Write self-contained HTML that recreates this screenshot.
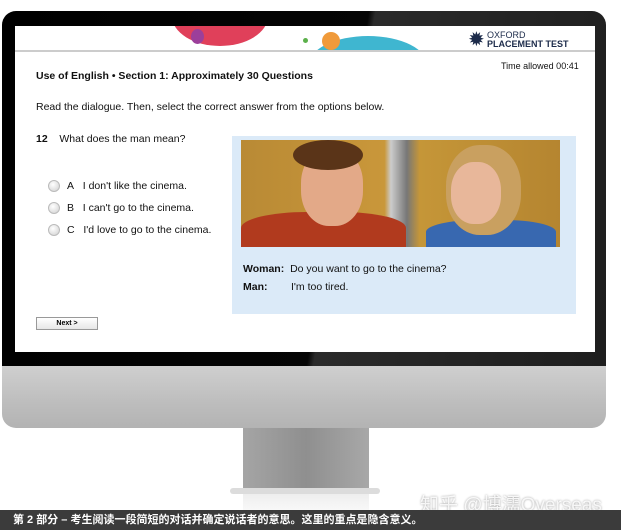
<!DOCTYPE html>
<html><head><meta charset="utf-8"><style>
body{margin:0;width:621px;height:530px;background:#fff;position:relative;overflow:hidden;font-family:"Liberation Sans",Arial,sans-serif;}
.abs{position:absolute}
.bezel{left:2px;top:11px;width:604px;height:360px;background:linear-gradient(100deg,#000 0%,#050505 55%,#2a2a2a 56%,#1e1e1e 100%);border-radius:14px 14px 0 0}
.chin{left:2px;top:366px;width:604px;height:62px;background:linear-gradient(#cfcfcf,#bdbdbd 60%,#b3b3b3);border-radius:0 0 14px 14px}
.screen{left:15px;top:26px;width:580px;height:326px;background:#fff;overflow:hidden}
.t{font-size:10.5px;color:#111;white-space:nowrap}
.radio{width:10px;height:10px;border-radius:50%;background:radial-gradient(circle at 40% 35%,#fff,#cfcfcf);border:1px solid #bbb}
</style></head><body>
<div class="abs bezel"></div>
<div class="abs chin"></div>
<div class="abs" style="left:243px;top:428px;width:126px;height:62px;background:linear-gradient(90deg,#a5a5a5,#8f8f8f 50%,#a8a8a8)"></div>
<div class="abs" style="left:230px;top:488px;width:150px;height:6px;background:#dcdcdc;border-radius:3px"></div>
<div class="abs" style="left:243px;top:494px;width:126px;height:16px;background:linear-gradient(#eee,#f8f8f8)"></div>
<div class="abs screen">
  <div class="abs" style="left:0;top:0;width:580px;height:24px;overflow:hidden">
    <div class="abs" style="left:157px;top:-40px;width:96px;height:60px;border-radius:50%;background:#e0405a"></div>
    <div class="abs" style="left:176px;top:3px;width:13px;height:15px;border-radius:50%;background:#9c3f9a"></div>
    <div class="abs" style="left:288px;top:12px;width:5px;height:5px;border-radius:50%;background:#5bb04a"></div>
    <div class="abs" style="left:293px;top:10px;width:120px;height:60px;border-radius:50%;background:#3fb6d0"></div>
    <div class="abs" style="left:307px;top:6px;width:18px;height:18px;border-radius:50%;background:#f09a3a"></div>
  </div>
  <div class="abs" style="left:0;top:24px;width:580px;height:2px;background:#ccc"></div>
  <div class="abs" style="left:453px;top:1px;font-size:20px;color:#1c2b4a">✹</div>
  <div class="abs" style="left:472px;top:5px;font-size:9px;color:#1c2b4a;line-height:9px">OXFORD<br><b>PLACEMENT TEST</b></div>
  <div class="abs t" style="left:486px;top:35px;font-size:9px">Time allowed 00:41</div>
  <div class="abs t" style="left:21px;top:44px;font-weight:bold">Use of English • Section 1: Approximately 30 Questions</div>
  <div class="abs t" style="left:21px;top:75px">Read the dialogue. Then, select the correct answer from the options below.</div>
  <div class="abs t" style="left:21px;top:107px"><b>12</b>&nbsp;&nbsp;&nbsp;&nbsp;What does the man mean?</div>
  <div class="abs radio" style="left:33px;top:154px"></div><div class="abs t" style="left:52px;top:154px">A&nbsp;&nbsp;&nbsp;I don't like the cinema.</div>
  <div class="abs radio" style="left:33px;top:176px"></div><div class="abs t" style="left:52px;top:176px">B&nbsp;&nbsp;&nbsp;I can't go to the cinema.</div>
  <div class="abs radio" style="left:33px;top:198px"></div><div class="abs t" style="left:52px;top:198px">C&nbsp;&nbsp;&nbsp;I'd love to go to the cinema.</div>
  <div class="abs" style="left:217px;top:110px;width:344px;height:178px;background:#dbeaf8"></div>
  <div class="abs" style="left:226px;top:114px;width:319px;height:107px;background:linear-gradient(90deg,#b98a35,#c9973a 45%,#ccc 47%,#777 52%,#c59638 56%,#b58530);overflow:hidden">
    <div class="abs" style="left:0;top:72px;width:165px;height:40px;background:#b13a1e;border-radius:40% 40% 0 0"></div>
    <div class="abs" style="left:60px;top:8px;width:62px;height:78px;border-radius:45%;background:#e3a988"></div>
    <div class="abs" style="left:52px;top:0;width:70px;height:30px;border-radius:50%;background:#5a3418"></div>
    <div class="abs" style="left:185px;top:80px;width:130px;height:30px;background:#3868b0;border-radius:40% 40% 0 0"></div>
    <div class="abs" style="left:205px;top:5px;width:75px;height:90px;border-radius:45%;background:#c9a060"></div>
    <div class="abs" style="left:210px;top:22px;width:50px;height:62px;border-radius:45%;background:#e8b79a"></div>
  </div>
  <div class="abs t" style="left:228px;top:237px"><b>Woman:</b>&nbsp;&nbsp;Do you want to go to the cinema?</div>
  <div class="abs t" style="left:228px;top:255px"><b>Man:</b></div><div class="abs t" style="left:276px;top:255px">I'm too tired.</div>
  <div class="abs" style="left:21px;top:291px;width:60px;height:11px;border:1px solid #999;background:linear-gradient(#fff,#e6e6e6);font-size:7px;text-align:center;line-height:11px;font-weight:bold">Next &gt;</div>
</div>
<div class="abs" style="left:420px;top:490px;font-size:19px;color:rgba(255,255,255,.85);text-shadow:0 0 2px #999;font-family:'Liberation Sans','Noto Sans CJK SC',sans-serif">知乎 @博濡Overseas</div>
<div class="abs" style="left:0;top:510px;width:621px;height:20px;background:#3b3b3b;color:#fff;font-size:11px;line-height:20px;padding-left:13px;font-weight:bold;font-family:'Liberation Sans','Noto Sans CJK SC',sans-serif">第 2 部分 – 考生阅读一段简短的对话并确定说话者的意思。这里的重点是隐含意义。</div>
</body></html>
